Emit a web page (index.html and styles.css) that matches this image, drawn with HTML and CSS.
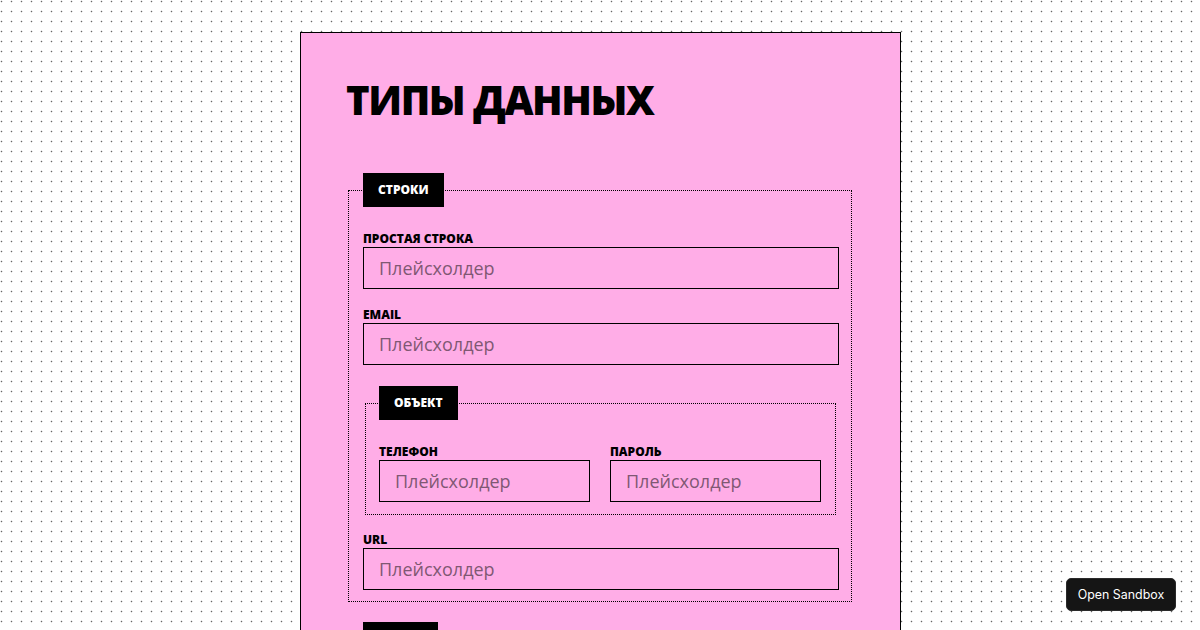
FILE: index.html
```html
<!DOCTYPE html>
<html lang="ru">
<head>
<meta charset="utf-8">
<title>Типы данных</title>
<link rel="stylesheet" href="styles.css">
</head>
<body>
<main class="card">
  <h1 class="title">Типы данных</h1>
  <form class="form">
    <fieldset class="group">
      <legend class="group-title">Строки</legend>
      <div class="fields">
        <div class="field">
          <label class="label" for="f1">Простая строка</label>
          <input class="input" id="f1" type="text" placeholder="Плейсхолдер">
        </div>
        <div class="field">
          <label class="label" for="f2">Email</label>
          <input class="input" id="f2" type="email" placeholder="Плейсхолдер">
        </div>
        <fieldset class="group group-nested">
          <legend class="group-title">Объект</legend>
          <div class="cols">
            <div class="field">
              <label class="label" for="f3">Телефон</label>
              <input class="input" id="f3" type="tel" placeholder="Плейсхолдер">
            </div>
            <div class="field">
              <label class="label" for="f4">Пароль</label>
              <input class="input" id="f4" type="password" placeholder="Плейсхолдер">
            </div>
          </div>
        </fieldset>
        <div class="field">
          <label class="label" for="f5">URL</label>
          <input class="input" id="f5" type="url" placeholder="Плейсхолдер">
        </div>
      </div>
    </fieldset>
    <fieldset class="group">
      <legend class="group-title">Числа</legend>
      <div class="fields">
        <div class="field">
          <label class="label" for="f6">Целое число</label>
          <input class="input" id="f6" type="number" placeholder="Плейсхолдер">
        </div>
        <div class="field">
          <label class="label" for="f7">Дробное число</label>
          <input class="input" id="f7" type="number" placeholder="Плейсхолдер">
        </div>
      </div>
    </fieldset>
  </form>
</main>
<button class="sandbox" type="button">Open Sandbox</button>
</body>
</html>
```
FILE: styles.css
```css
html, body {
  margin: 0;
  padding: 0;
}
body {
  background-color: #fff;
  background-image: radial-gradient(circle at 1.5px 1.5px, #666 0.6px, transparent 1.1px);
  background-size: 10px 10px;
  font-family: "Open Sans", "Liberation Sans", sans-serif;
  color: #000;
}
.card {
  box-sizing: border-box;
  width: 601px;
  margin: 32px 0 0 300px;
  padding: 43px 48px 60px 47px;
  background: #ffade7;
  border: 1px solid #000;
}
.title {
  margin: 0 0 0 -2px;
  font-size: 40px;
  line-height: 48px;
  font-weight: 800;
  text-transform: uppercase;
  letter-spacing: -1.4px;
}
.form {
  display: flex;
  flex-direction: column;
  gap: 20px;
  margin-top: 49px;
}
.group {
  margin: 0;
  min-width: 0;
  padding: 0 12px 11px 14px;
  border: 1px dotted #000;
}
.group-nested {
  margin: 3px 3px -1px 2px;
  padding: 0 14px 12px 13px;
}
.group-title {
  padding: 0 15px;
  height: 34px;
  line-height: 34px;
  background: #000;
  color: #fff;
  font-size: 12px;
  font-weight: 800;
  text-transform: uppercase;
}
.fields {
  display: flex;
  flex-direction: column;
  gap: 18px;
  margin-top: 24px;
}
.group-nested .cols {
  margin-top: 24px;
}
.cols {
  display: grid;
  grid-template-columns: 1fr 1fr;
  column-gap: 20px;
}
.field {
  display: flex;
  flex-direction: column;
}
.label {
  display: block;
  font-size: 12px;
  line-height: 16px;
  font-weight: 800;
  text-transform: uppercase;
}
.input {
  box-sizing: border-box;
  display: block;
  width: 100%;
  height: 42px;
  margin: 0;
  padding: 0 15px;
  border: 1px solid #000;
  border-radius: 0;
  background: transparent;
  font-family: "Open Sans", "Liberation Sans", sans-serif;
  font-size: 18px;
  color: #000;
  outline: none;
}
.input::placeholder {
  color: #7f5873;
  opacity: 1;
}
.sandbox {
  position: fixed;
  right: 24px;
  bottom: 19px;
  width: 110px;
  height: 33px;
  padding: 0;
  background: #151515;
  color: #fff;
  border: 1px solid #2a2a2a;
  border-radius: 5px;
  font-family: Inter, "Liberation Sans", sans-serif;
  font-size: 12.4px;
  cursor: pointer;
}
```
